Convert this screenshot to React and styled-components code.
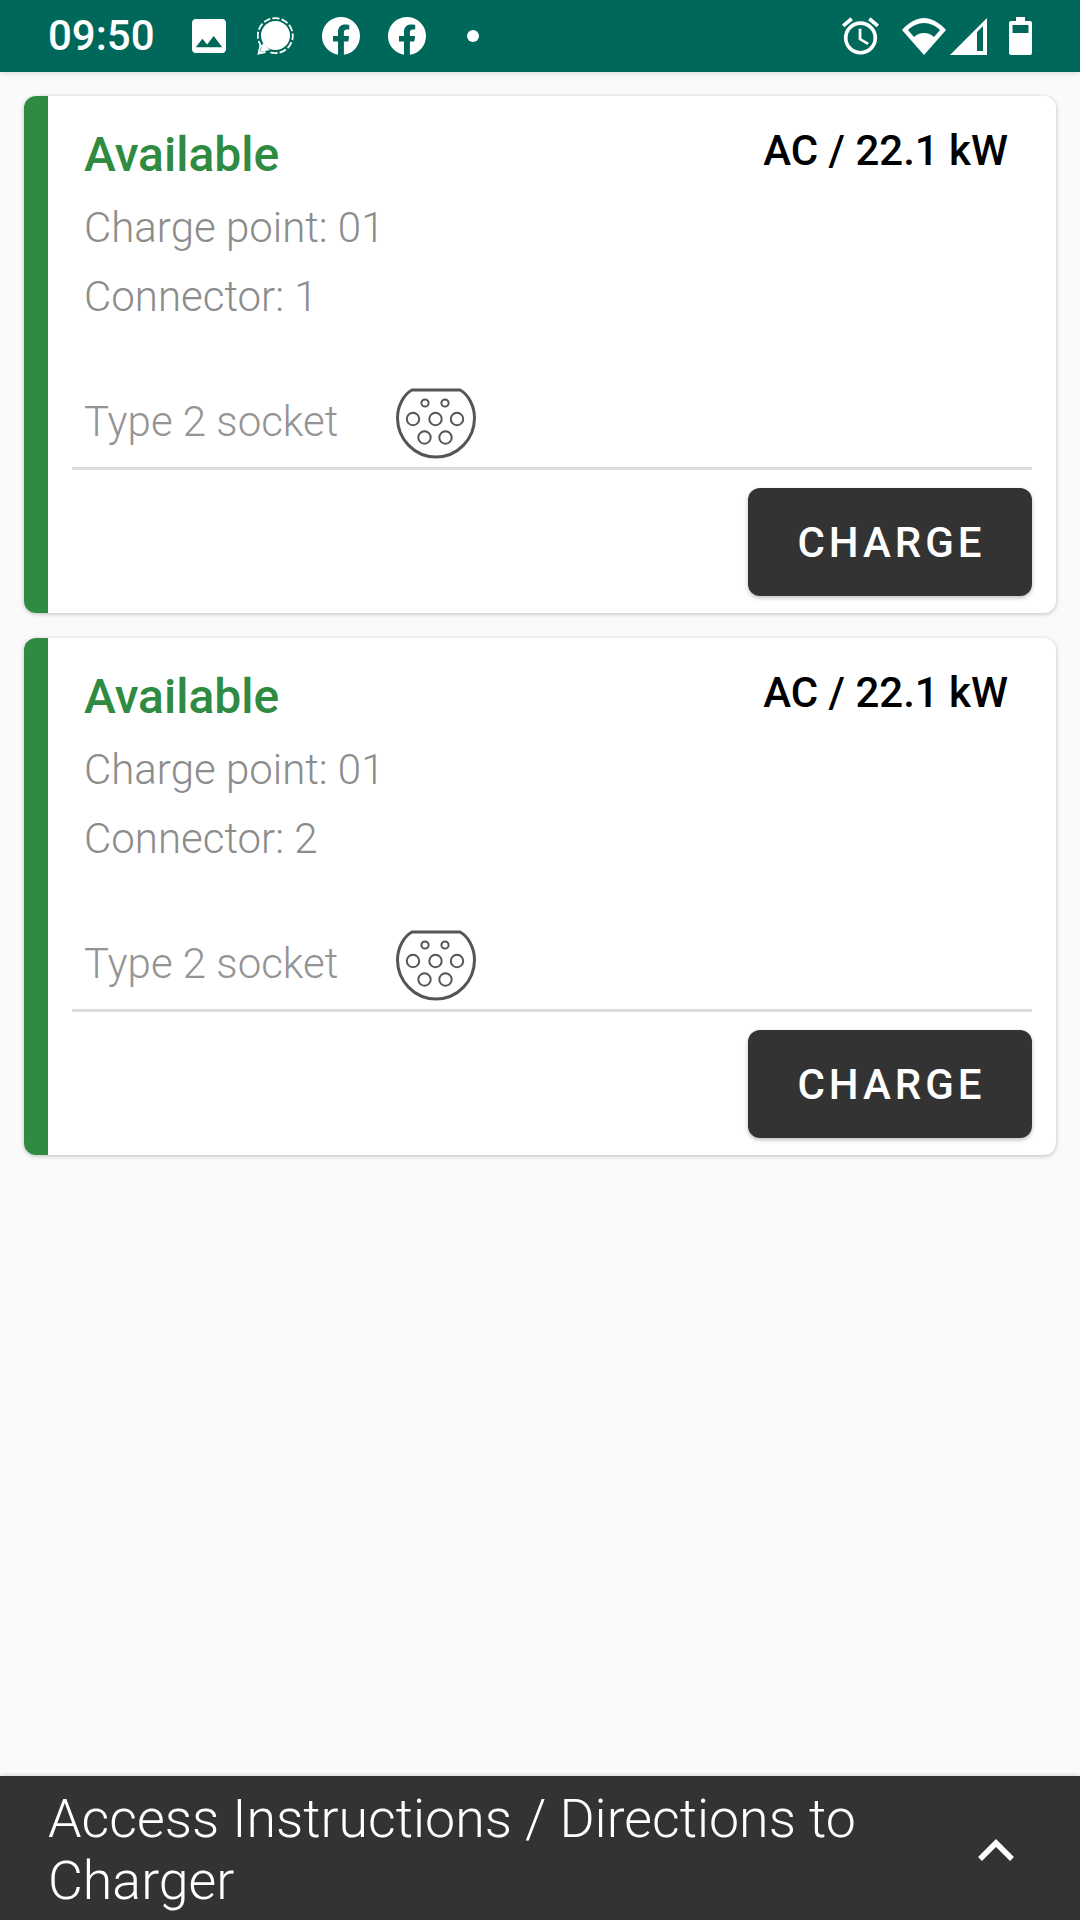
import React from 'react'
import styled, { createGlobalStyle } from 'styled-components'

const Global = createGlobalStyle`
  html, body { margin: 0; padding: 0; background: #fafafa; }
  body { font-family: Roboto, sans-serif; }
`

const Page = styled.div`
  width: 1080px;
  height: 1920px;
  display: flex;
  flex-direction: column;
  overflow: hidden;
  background: #fafafa;
`

const StatusBar = styled.div`
  height: 72px;
  flex: none;
  display: flex;
  align-items: center;
  justify-content: space-between;
  padding: 0 48px;
  background: #00685a;
  color: #fff;
  box-shadow: 0 2px 5px rgba(0, 0, 0, 0.1);
`

const Clock = styled.span`
  font-size: 42px;
  font-weight: 500;
  line-height: 72px;
`

const StatusGroup = styled.div`
  display: flex;
  align-items: center;
`

const StatusIcon = styled.span`
  display: flex;
  margin-left: ${p => p.$gap}px;
`

const List = styled.div`
  flex: 1;
  display: flex;
  flex-direction: column;
  gap: 25px;
  padding: 24px 24px 0;
`

const Card = styled.div`
  height: 517px;
  box-sizing: border-box;
  display: flex;
  background: #fff;
  border-radius: 12px;
  overflow: hidden;
  box-shadow: 0 1px 4px rgba(0, 0, 0, 0.25);
`

const Strip = styled.div`
  width: 24px;
  flex: none;
  background: ${p => p.$color};
`

const CardBody = styled.div`
  flex: 1;
  display: flex;
  flex-direction: column;
  padding: 0 24px;
`

const TopRow = styled.div`
  display: flex;
  justify-content: space-between;
  padding: 30px 24px 0 12px;
`

const Status = styled.span`
  font-size: 48px;
  line-height: 58px;
  font-weight: 500;
  color: #2e8b41;
`

const Power = styled.span`
  font-size: 42px;
  line-height: 50px;
  font-weight: 500;
  color: #000;
`

const Info = styled.div`
  font-size: 42px;
  font-weight: 300;
  line-height: 50px;
  color: #8c8c8c;
  padding-left: 12px;
  margin-top: ${p => p.$top}px;
`

const SocketRow = styled.div`
  box-sizing: border-box;
  height: 96px;
  margin-top: 52px;
  display: flex;
  align-items: center;
  gap: 58px;
  padding: 2px 0 0 12px;
  border-bottom: 3px solid #dcdcdc;
  font-size: 42px;
  font-weight: 300;
  color: #949494;
`

const SocketWrap = styled.span`
  display: flex;
  margin-top: 3px;
`

const Actions = styled.div`
  display: flex;
  justify-content: flex-end;
  padding-top: 18px;
`

const ChargeButton = styled.button`
  width: 284px;
  height: 108px;
  border: 0;
  padding: 0 0 0 3px;
  border-radius: 12px;
  background: #333;
  color: #fff;
  font-family: Roboto, sans-serif;
  font-size: 42px;
  font-weight: 500;
  letter-spacing: 4px;
  box-shadow: 0 2px 4px rgba(0, 0, 0, 0.25);
`

const BottomBar = styled.div`
  height: 144px;
  flex: none;
  box-sizing: border-box;
  display: flex;
  align-items: center;
  justify-content: space-between;
  padding: 4px 66px 0 48px;
  background: #333;
  color: #fff;
  box-shadow: 0 -1px 4px rgba(0, 0, 0, 0.15);
`

const BottomTitle = styled.div`
  width: 880px;
  font-size: 53.7px;
  line-height: 62px;
  font-weight: 300;
`

const ImageIcon = () => (
  <svg width="34" height="34" viewBox="3 3 18 18">
    <path fill="#fff" d="M21 19V5c0-1.100-.9-2-2-2H5c-1.100 0-2 .9-2 2v14c0 1.100.9 2 2 2h14c1.100 0 2-.9 2-2zM8.500 13.500l2.500 3.010L14.500 12l4.500 6H5l3.500-4.500z" />
  </svg>
)

const SignalAppIcon = () => (
  <svg width="37" height="38" viewBox="0 0 37 38">
    <circle cx="18.500" cy="18.500" r="14.500" fill="#fff" />
    <path fill="#fff" d="M6 26l-3 9 10-2z" />
    <path fill="none" stroke="#fff" strokeWidth="1.800" strokeDasharray="7 2.200" d="M5 30A17.500 17.500 0 1 1 13 35.300" />
    <path fill="none" stroke="#fff" strokeWidth="1.800" d="M3.500 28l-2 8.500 7-1.500" />
  </svg>
)

const FacebookIcon = () => (
  <svg width="38" height="38" viewBox="0 0 38 38">
    <path fill="#fff" d="M38 19a19 19 0 1 0-22 18.800V24.500h-5V19h5v-4.200c0-4.800 2.800-7.400 7.200-7.400 2 0 4 .4 4 .4v4.600h-2.300c-2.300 0-3 1.400-3 2.900V19h5.200l-.8 5.500h-4.400v13.300A19 19 0 0 0 38 19z" />
  </svg>
)

const AlarmIcon = () => (
  <svg width="37" height="38" viewBox="2 1.800 20 20.300">
    <path fill="#fff" d="M22 5.720l-4.600-3.860-1.290 1.530 4.600 3.860L22 5.720zM7.880 3.390L6.600 1.860 2 5.710l1.290 1.530 4.590-3.850zM12.500 8H11v6l4.750 2.850.75-1.230-4-2.370V8zM12 4a9 9 0 1 0 .01 18.010A9 9 0 0 0 12 4zm0 16a7 7 0 1 1 0-14 7 7 0 0 1 0 14z" />
  </svg>
)

const WifiIcon = () => (
  <svg width="44" height="37" viewBox="0 0 44 37">
    <path fill="#fff" fillRule="evenodd" d="M22 37L0 12C6 5 14 0 22 0s16 5 22 12zM6 12c4-4 10-7 16-7s12 3 16 7l-6 7c-3-2.500-6-4-10-4s-7 1.500-10 4z" />
  </svg>
)

const SignalIcon = () => (
  <svg width="37" height="37" viewBox="0 0 37 37">
    <path fill="#fff" fillRule="evenodd" d="M0 37L37 0v37zM27 33h6V8l-6 6z" />
  </svg>
)

const BatteryIcon = () => (
  <svg width="23" height="38" viewBox="0 0 23 38">
    <path fill="#fff" fillRule="evenodd" d="M7 0h9v4h5a2 2 0 0 1 2 2v30a2 2 0 0 1-2 2H2a2 2 0 0 1-2-2V6a2 2 0 0 1 2-2h5zM3.500 8v8h16V8z" />
  </svg>
)

const SocketIcon = () => (
  <svg width="80" height="71" viewBox="0 0 80 71" fill="none" stroke="#555">
    <path strokeWidth="3" d="M16 2h48C72 6 78.500 18 78.500 30c0 21-17 39-38.500 39S1.500 51 1.500 30C1.500 18 8 6 16 2z" />
    <g strokeWidth="2">
      <circle cx="29" cy="15" r="3.600" />
      <circle cx="49" cy="15" r="3.600" />
      <circle cx="17" cy="31" r="6.200" />
      <circle cx="39.500" cy="31" r="6.200" />
      <circle cx="61" cy="31" r="6.200" />
      <circle cx="28.500" cy="49.500" r="6.200" />
      <circle cx="49.500" cy="49.500" r="6.200" />
    </g>
  </svg>
)

const ChevronUp = () => (
  <svg width="36" height="22" viewBox="0 0 36 22">
    <path fill="none" stroke="#fff" strokeWidth="5.500" d="M2 20L18 4l16 16" />
  </svg>
)

const connectors = [
  { id: 1, point: '01', number: 1 },
  { id: 2, point: '01', number: 2 },
]

const ConnectorCard = ({ point, number }) => (
  <Card>
    <Strip $color="#2e8b41" />
    <CardBody>
      <TopRow>
        <Status>Available</Status>
        <Power>AC / 22.1 kW</Power>
      </TopRow>
      <Info $top={19}>Charge point: {point}</Info>
      <Info $top={19}>Connector: {number}</Info>
      <SocketRow>
        Type 2 socket
        <SocketWrap><SocketIcon /></SocketWrap>
      </SocketRow>
      <Actions>
        <ChargeButton>CHARGE</ChargeButton>
      </Actions>
    </CardBody>
  </Card>
)

const App = () => (
  <Page>
    <Global />
    <StatusBar>
      <StatusGroup>
        <Clock>09:50</Clock>
        <StatusIcon $gap={37}><ImageIcon /></StatusIcon>
        <StatusIcon $gap={31}><SignalAppIcon /></StatusIcon>
        <StatusIcon $gap={28}><FacebookIcon /></StatusIcon>
        <StatusIcon $gap={28}><FacebookIcon /></StatusIcon>
        <StatusIcon $gap={41}>
          <svg width="12" height="12" viewBox="0 0 12 12"><circle cx="6" cy="6" r="6" fill="#fff" /></svg>
        </StatusIcon>
      </StatusGroup>
      <StatusGroup>
        <StatusIcon $gap={0}><AlarmIcon /></StatusIcon>
        <StatusIcon $gap={23}><WifiIcon /></StatusIcon>
        <StatusIcon $gap={4}><SignalIcon /></StatusIcon>
        <StatusIcon $gap={22}><BatteryIcon /></StatusIcon>
      </StatusGroup>
    </StatusBar>
    <List>
      {connectors.map(c => <ConnectorCard key={c.id} point={c.point} number={c.number} />)}
    </List>
    <BottomBar>
      <BottomTitle>Access Instructions / Directions to Charger</BottomTitle>
      <ChevronUp />
    </BottomBar>
  </Page>
)

export default App
